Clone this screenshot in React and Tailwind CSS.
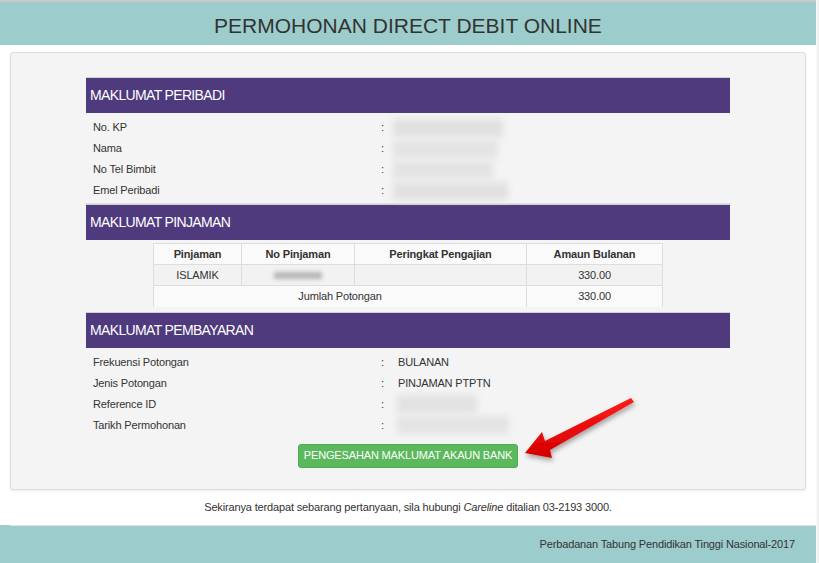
export default function App() {
  const Blur = ({ w, h = 18, c = "#e3e3e3" }) => (
    <div className="blur-[3px]" style={{ width: w, height: h, background: c }} />
  );
  const Row = ({ label, value }) => (
    <div className="flex items-center h-[21px] text-[11px] tracking-[-0.15px] text-[#333]">
      <div className="w-[295px] pl-[7px]">{label}</div>
      <div className="w-[12px]">:</div>
      <div className="flex-1">{value}</div>
    </div>
  );
  const Bar = ({ children }) => (
    <div className="h-[36px] border-t border-[#d2d2d2] bg-[#4e3a7c] text-white text-[14px] tracking-[-0.65px] pl-[4px] flex items-center">
      {children}
    </div>
  );
  return (
    <div className="relative w-[819px] h-[563px] overflow-hidden bg-white flex font-['Liberation_Sans',Arial,sans-serif]">
      <div className="w-[816px] flex flex-col">
        <div className="h-[2px] bg-[#c9c9c9] shrink-0" />
        <header className="h-[43px] shrink-0 bg-[#9ccccc] flex items-center justify-center pt-[4px] text-[21px] text-[#333]">
          PERMOHONAN DIRECT DEBIT ONLINE
        </header>
        <div className="mt-[7px] mx-[10px] h-[438px] shrink-0 bg-[#f4f4f4] border border-[#dddddd] rounded-[3px] shadow-[0_1px_2px_rgba(0,0,0,0.08)] pt-[24px] px-[75px]">
          <Bar>MAKLUMAT PERIBADI</Bar>
          <div className="pt-[4px] pb-[2px] border-b border-[#dddddd]">
            <Row label="No. KP" value={<Blur w={110} c="#e1e1e1" />} />
            <Row label="Nama" value={<Blur w={105} c="#e4e4e4" />} />
            <Row label="No Tel Bimbit" value={<Blur w={100} c="#e3e3e3" />} />
            <Row label="Emel Peribadi" value={<Blur w={115} c="#e1e1e1" />} />
          </div>
          <Bar>MAKLUMAT PINJAMAN</Bar>
          <table className="mt-[3px] mx-auto w-[509px] border-collapse text-[11px] tracking-[-0.15px] text-[#333] table-fixed">
            <colgroup>
              <col className="w-[88px]" />
              <col className="w-[113px]" />
              <col className="w-[172px]" />
              <col className="w-[136px]" />
            </colgroup>
            <thead>
              <tr className="h-[21px] bg-[#fafafa]">
                <th className="border border-[#dddddd] font-bold text-center">Pinjaman</th>
                <th className="border border-[#dddddd] font-bold text-center">No Pinjaman</th>
                <th className="border border-[#dddddd] font-bold text-center">Peringkat Pengajian</th>
                <th className="border border-[#dddddd] font-bold text-center">Amaun Bulanan</th>
              </tr>
            </thead>
            <tbody>
              <tr className="h-[21px] bg-[#f2f2f2]">
                <td className="border border-[#dddddd] text-center">ISLAMIK</td>
                <td className="border border-[#dddddd]">
                  <div className="flex justify-center">
                    <div className="w-[48px] h-[7px] bg-[#b5b5b5] blur-[2px]" />
                  </div>
                </td>
                <td className="border border-[#dddddd]"></td>
                <td className="border border-[#dddddd] text-center">330.00</td>
              </tr>
              <tr className="h-[21px] bg-[#fafafa]">
                <td colSpan={3} className="border-x border-t border-[#dddddd] text-center">Jumlah Potongan</td>
                <td className="border-x border-t border-[#dddddd] text-center">330.00</td>
              </tr>
            </tbody>
          </table>
          <div className="h-[5px]" />
          <Bar>MAKLUMAT PEMBAYARAN</Bar>
          <div className="pt-[4px]">
            <Row label="Frekuensi Potongan" value={<span className="pl-[5px]">BULANAN</span>} />
            <Row label="Jenis Potongan" value={<span className="pl-[5px]">PINJAMAN PTPTN</span>} />
            <Row label="Reference ID" value={<div className="pl-[4px]"><Blur w={80} c="#e2e2e2" /></div>} />
            <Row label="Tarikh Permohonan" value={<div className="pl-[4px]"><Blur w={112} c="#e4e4e4" /></div>} />
          </div>
          <div className="mt-[8px] flex justify-center">
            <button className="w-[220px] h-[24px] bg-[#5cb85c] border border-[#4cae4c] rounded-[3px] text-white text-[11px] tracking-[-0.15px] flex items-center justify-center">
              PENGESAHAN MAKLUMAT AKAUN BANK
            </button>
          </div>
        </div>
        <div className="h-[35px] shrink-0 flex items-center justify-center text-[11px] tracking-[-0.15px] text-[#333]">
          <span>
            Sekiranya terdapat sebarang pertanyaan, sila hubungi <i>Careline</i> ditalian 03-2193 3000.
          </span>
        </div>
        <footer className="h-[38px] shrink-0 bg-[#9ccccc] flex flex-col">
          <div className="ml-[10px] h-[1px] bg-[#e3e3e3]" />
          <div className="flex-1 flex items-center justify-end pr-[21px] text-[11px] tracking-[-0.15px] text-[#333]">
            Perbadanan Tabung Pendidikan Tinggi Nasional-2017
          </div>
        </footer>
      </div>
      <div className="w-[3px] bg-[#f1f1f1] border-l border-[#fafafa]" />
      <svg className="absolute left-0 top-0 pointer-events-none" width="819" height="563" viewBox="0 0 819 563">
        <defs>
          <linearGradient id="ag" x1="0" y1="0" x2="0" y2="1">
            <stop offset="0" stopColor="#ff1a1a" />
            <stop offset="1" stopColor="#d40000" />
          </linearGradient>
          <filter id="sh" x="-20%" y="-20%" width="140%" height="160%">
            <feDropShadow dx="1" dy="3" stdDeviation="2.5" floodColor="#000" floodOpacity="0.35" />
          </filter>
        </defs>
        <polygon
          points="525,453 542,432 545,441 631,398 634,402 550,450 552,458"
          fill="url(#ag)"
          filter="url(#sh)"
        />
      </svg>
    </div>
  );
}
